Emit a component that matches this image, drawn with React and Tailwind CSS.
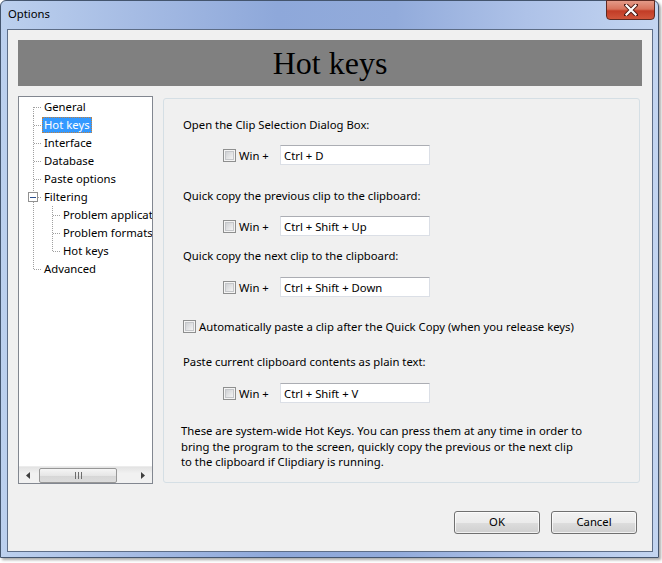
import React from "react";

const ui = "font-['Noto_Sans',sans-serif] text-[11.3px] text-black";

function Check() {
  return (
    <span className="box-border inline-flex w-[13px] h-[13px] shrink-0 border border-[#8e8f8f] bg-[#f4f4f4] p-[1px]">
      <span className="block w-full h-full border border-[#c4c6c9] bg-[linear-gradient(135deg,#cfd1d4,#f3f3f3)]" />
    </span>
  );
}

function KeyRow({ value, mt }) {
  return (
    <div className={`flex items-center h-[20px] ml-[40px] ${mt}`}>
      <Check />
      <span className="w-[44px] pl-[3px] leading-[15px]">Win +</span>
      <div className="box-border w-[150px] h-[20px] border border-[#dbdfe6] border-t-[#abadb3] bg-white flex items-center pl-[3px] leading-[15px]">
        {value}
      </div>
    </div>
  );
}

function Button({ children }) {
  return (
    <div className="box-border w-[86px] h-[23px] rounded-[3px] border border-[#707070] bg-[linear-gradient(180deg,#f2f2f2_0%,#ebebeb_50%,#dddddd_51%,#cfcfcf_100%)] flex items-center justify-center shadow-[inset_0_0_0_1px_rgba(255,255,255,0.7)]">
      {children}
    </div>
  );
}

const dot = { stroke: "#a0a0a0", strokeDasharray: "1 1", strokeWidth: 1 };

function Connector({ item }) {
  if (item.lvl === 1) {
    return (
      <svg width="42" height="18" shapeRendering="crispEdges" className="shrink-0">
        <line x1="14.5" y1="0" x2="14.5" y2="18" {...dot} />
        <line x1="33.5" y1="0" x2="33.5" y2={item.last ? 10 : 18} {...dot} />
        <line x1="34" y1="9.5" x2="42" y2="9.5" {...dot} />
      </svg>
    );
  }
  if (item.exp) {
    return (
      <svg width="23" height="18" shapeRendering="crispEdges" className="shrink-0">
        <line x1="14.5" y1="0" x2="14.5" y2="5" {...dot} />
        <line x1="14.5" y1="14" x2="14.5" y2="18" {...dot} />
        <rect x="9.5" y="4.5" width="9" height="9" fill="white" stroke="#919191" />
        <line x1="11" y1="9.5" x2="17" y2="9.5" stroke="#2b4f8f" />
        <line x1="19" y1="9.5" x2="23" y2="9.5" {...dot} />
      </svg>
    );
  }
  return (
    <svg width="23" height="18" shapeRendering="crispEdges" className="shrink-0">
      <line x1="14.5" y1={item.first ? 9 : 0} x2="14.5" y2={item.last ? 10 : 18} {...dot} />
      <line x1="15" y1="9.5" x2="23" y2="9.5" {...dot} />
    </svg>
  );
}

const items = [
  { t: "General", first: true },
  { t: "Hot keys", sel: true },
  { t: "Interface" },
  { t: "Database" },
  { t: "Paste options" },
  { t: "Filtering", exp: true },
  { t: "Problem applications", lvl: 1 },
  { t: "Problem formats", lvl: 1 },
  { t: "Hot keys", lvl: 1, last: true },
  { t: "Advanced", last: true },
];

function Tree() {
  return (
    <div className="box-border w-[135px] h-[388px] border border-[#828790] bg-white flex flex-col overflow-hidden">
      <div className="flex-1 pt-[1px] overflow-hidden">
        {items.map((it, i) => (
          <div key={i} className="flex items-center h-[18px] whitespace-nowrap">
            <Connector item={it} />
            <span
              className={
                it.sel
                  ? "box-border h-[16px] flex items-center px-[1px] bg-[#3399ff] text-white border border-dotted border-[#c08040] leading-[14px]"
                  : "h-[16px] flex items-center px-[2px] leading-[14px]"
              }
            >
              {it.t}
            </span>
          </div>
        ))}
      </div>
      <div className="h-[17px] flex items-center bg-[linear-gradient(180deg,#e3e3e3,#f1f1f1_40%,#f1f1f1)] border-t border-[#ececec]">
        <div className="w-[18px] h-full flex items-center justify-center">
          <svg width="5" height="7"><path d="M4 0 L0 3.5 L4 7 Z" fill="#3f3f3f" /></svg>
        </div>
        <div className="box-border ml-[2px] w-[78px] h-[15px] rounded-[2px] border border-[#979797] bg-[linear-gradient(180deg,#f5f5f5,#e6e6e6_50%,#d6d6d6_51%,#dcdcdc)] flex items-center justify-center gap-[2px]">
          <span className="w-[1px] h-[7px] bg-[#6d6d6d]" />
          <span className="w-[1px] h-[7px] bg-[#6d6d6d]" />
          <span className="w-[1px] h-[7px] bg-[#6d6d6d]" />
        </div>
        <div className="flex-1" />
        <div className="w-[18px] h-full flex items-center justify-center">
          <svg width="5" height="7"><path d="M0 0 L4 3.5 L0 7 Z" fill="#3f3f3f" /></svg>
        </div>
      </div>
    </div>
  );
}

function Panel() {
  return (
    <div className="box-border mt-[2px] w-[477px] h-[385px] rounded-[3px] border border-[#d5dfe5] bg-[#f0f0f0] pl-[19px] pt-[18px] leading-[15px]">
      <div>Open the Clip Selection Dialog Box:</div>
      <KeyRow value="Ctrl + D" mt="mt-[13px]" />
      <div className="mt-[23px]">Quick copy the previous clip to the clipboard:</div>
      <KeyRow value="Ctrl + Shift + Up" mt="mt-[13px]" />
      <div className="mt-[12px]">Quick copy the next clip to the clipboard:</div>
      <KeyRow value="Ctrl + Shift + Down" mt="mt-[14px]" />
      <div className="mt-[22px] flex items-center h-[15px]">
        <Check />
        <span className="pl-[3px]">Automatically paste a clip after the Quick Copy (when you release keys)</span>
      </div>
      <div className="mt-[20px]">Paste current clipboard contents as plain text:</div>
      <KeyRow value="Ctrl + Shift + V" mt="mt-[14px]" />
      <div className="mt-[20px] -ml-[2px] leading-[15.5px]">
        These are system-wide Hot Keys. You can press them at any time in order to
        <br />
        bring the program to the screen, quickly copy the previous or the next clip
        <br />
        to the clipboard if Clipdiary is running.
      </div>
    </div>
  );
}

export default function App() {
  return (
    <div className={`w-[662px] h-[563px] bg-white ${ui}`}>
      <div className="box-border w-[659px] h-[558px] rounded-t-[6px] border border-[#44556e] bg-[linear-gradient(90deg,#bcd0ee_0%,#a6bce4_20%,#8ea8da_42%,#92abdb_60%,#aec2e8_80%,#c3d5f1_100%)] flex flex-col shadow-[2px_2px_3px_rgba(0,0,0,0.35)]">
        <div className="h-[28px] shrink-0 flex items-start justify-between">
          <div className="h-[27px] flex items-center pl-[7px]">Options</div>
          <div className="box-border -mt-[1px] mr-[3px] w-[49px] h-[20px] rounded-b-[4px] border border-[#5e2a22] bg-[linear-gradient(180deg,#e49a88_0%,#d8735c_45%,#c23c26_55%,#d0553b_100%)] flex items-center justify-center">
            <svg width="14" height="12" viewBox="0 0 14 12">
              <path d="M2 1 L12 11 M12 1 L2 11" stroke="#4a1a14" strokeWidth="4" strokeLinecap="square" />
              <path d="M2.5 1.5 L11.5 10.5 M11.5 1.5 L2.5 10.5" stroke="#ffffff" strokeWidth="2.2" strokeLinecap="square" />
            </svg>
          </div>
        </div>
        <div className="flex-1 pl-[6px] pr-[5px] pb-[5px] flex">
          <div className="box-border flex-1 border border-[#5d6d87] bg-[#f0f0f0] flex flex-col pt-[10px] px-[10px]">
            <div className="h-[46px] bg-[#808080] flex items-center justify-center">
              <span className="font-['Liberation_Serif',serif] text-[32px] leading-none text-black -mt-[1px]">Hot keys</span>
            </div>
            <div className="mt-[10px] flex items-start gap-[10px]">
              <Tree />
              <Panel />
            </div>
            <div className="mt-[27px] flex justify-end gap-[11px] pr-[5px]">
              <Button>OK</Button>
              <Button>Cancel</Button>
            </div>
          </div>
        </div>
      </div>
    </div>
  );
}
